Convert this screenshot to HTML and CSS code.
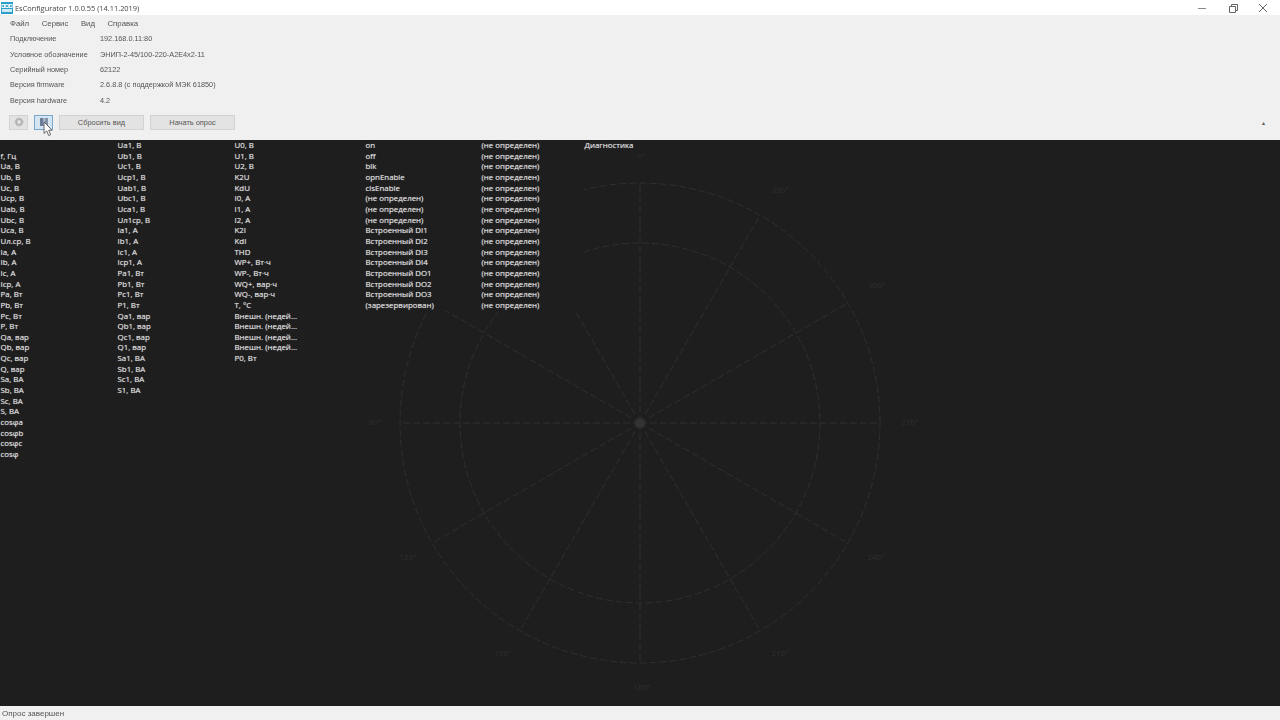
FILE: index.html
```html
<!DOCTYPE html>
<html lang="ru">
<head>
<meta charset="utf-8">
<title>EsConfigurator</title>
<link rel="stylesheet" href="styles.css">
</head>
<body>
<div class="window">
  <header class="titlebar">
    <svg class="logo" viewBox="0 0 12 12"><rect width="12" height="12" fill="#2a9fcb"/><rect x="1" y="2.5" width="2.6" height="3" fill="none" stroke="#fff" stroke-width=".9"/><rect x="4.7" y="2.5" width="2.6" height="3" fill="none" stroke="#fff" stroke-width=".9"/><rect x="8.4" y="2.5" width="2.6" height="3" fill="none" stroke="#fff" stroke-width=".9"/><rect x="1" y="7" width="10" height="3" fill="#cfeaf5"/></svg>
    <span class="title">EsConfigurator 1.0.0.55 (14.11.2019)</span>
    <div class="winctl">
      <svg viewBox="0 0 10 10"><path d="M1 5.5H9" stroke="#888" fill="none"/></svg>
      <svg viewBox="0 0 10 10"><path d="M1.5 3.5H7.5V9.5H1.5ZM3.5 3.5V1.5H9.5V7.5H7.5" stroke="#666" fill="none"/></svg>
      <svg viewBox="0 0 10 10"><path d="M1 1L9 9M9 1L1 9" stroke="#666" fill="none"/></svg>
    </div>
  </header>
  <section class="panel">
    <nav class="menu"><span>Файл</span><span>Сервис</span><span>Вид</span><span>Справка</span></nav>
    <dl class="info">
      <dt>Подключение</dt><dd>192.168.0.11:80</dd>
      <dt>Условное обозначение</dt><dd>ЭНИП-2-45/100-220-А2Е4х2-11</dd>
      <dt>Серийный номер</dt><dd>62122</dd>
      <dt>Версия firmware</dt><dd>2.6.8.8 (с поддержкой МЭК 61850)</dd>
      <dt>Версия hardware</dt><dd>4.2</dd>
    </dl>
    <div class="toolbar">
      <button class="btn icon-btn" type="button"><svg viewBox="0 0 12 12"><circle cx="6" cy="6" r="3.4" fill="none" stroke="#b0b0b0" stroke-width="2.2"/><circle cx="6" cy="6" r="5" fill="none" stroke="#bbb" stroke-width="1.2" stroke-dasharray="1.6 1.6"/></svg></button>
      <button class="btn icon-btn active" type="button"><svg viewBox="0 0 10 10"><rect x="1" y="1" width="3.5" height="8" fill="#6b7d98"/><rect x="5.5" y="1" width="3.5" height="8" fill="#8494ab"/></svg></button>
      <button class="btn wide" type="button">Сбросить вид</button>
      <button class="btn wide" type="button">Начать опрос</button>
      <span class="collapse">▴</span>
    </div>
    <svg class="cursor" viewBox="0 0 12 18"><path d="M1 1V14L4 11.2L6.2 16.4L8.4 15.4L6.2 10.4H10Z" fill="#fff" stroke="#555" stroke-width="1"/></svg>
  </section>
  <main class="scope">
    <svg class="polar" viewBox="0 0 1280 566">
      <g class="grid">
        <circle cx="640" cy="283" r="180"/>
        <circle cx="640" cy="283" r="240"/>
        <path d="M640 283V43M640 283L760 75.2M640 283L847.8 163M640 283H880M640 283L847.8 403M640 283L760 490.8M640 283V523M640 283L520 490.8M640 283L432.2 403M640 283H400M640 283L432.2 163M640 283L520 75.2"/>
      </g>
      <circle class="hub" cx="640" cy="283" r="5"/>
      <g class="deg">
        <text x="642" y="17">0°</text>
        <text x="780" y="51">330°</text>
        <text x="877" y="146">300°</text>
        <text x="910" y="283">270°</text>
        <text x="876" y="418">240°</text>
        <text x="780" y="514">210°</text>
        <text x="642" y="548">180°</text>
        <text x="503" y="514">150°</text>
        <text x="408" y="418">120°</text>
        <text x="375" y="283">90°</text>
      </g>
    </svg>
    <div class="tables">
      <ul class="col c1">
        <li>&nbsp;</li><li>f, Гц</li><li>Ua, В</li><li>Ub, В</li><li>Uc, В</li><li>Uср, В</li><li>Uab, В</li><li>Ubc, В</li><li>Uca, В</li><li>Uл.ср, В</li><li>Ia, А</li><li>Ib, А</li><li>Ic, А</li><li>Iср, А</li><li>Pa, Вт</li><li>Pb, Вт</li><li>Pc, Вт</li><li>P, Вт</li><li>Qa, вар</li><li>Qb, вар</li><li>Qc, вар</li><li>Q, вар</li><li>Sa, ВА</li><li>Sb, ВА</li><li>Sc, ВА</li><li>S, ВА</li><li>cosφa</li><li>cosφb</li><li>cosφc</li><li>cosφ</li>
      </ul>
      <ul class="col c2">
        <li>Ua1, В</li><li>Ub1, В</li><li>Uc1, В</li><li>Uср1, В</li><li>Uab1, В</li><li>Ubc1, В</li><li>Uca1, В</li><li>Uл1ср, В</li><li>Ia1, А</li><li>Ib1, А</li><li>Ic1, А</li><li>Iср1, А</li><li>Pa1, Вт</li><li>Pb1, Вт</li><li>Pc1, Вт</li><li>P1, Вт</li><li>Qa1, вар</li><li>Qb1, вар</li><li>Qc1, вар</li><li>Q1, вар</li><li>Sa1, ВА</li><li>Sb1, ВА</li><li>Sc1, ВА</li><li>S1, ВА</li>
      </ul>
      <ul class="col c3">
        <li>U0, В</li><li>U1, В</li><li>U2, В</li><li>K2U</li><li>KdU</li><li>I0, А</li><li>I1, А</li><li>I2, А</li><li>K2I</li><li>KdI</li><li>THD</li><li>WP+, Вт·ч</li><li>WP-, Вт·ч</li><li>WQ+, вар·ч</li><li>WQ-, вар·ч</li><li>T, °C</li><li>Внешн. (недей...</li><li>Внешн. (недей...</li><li>Внешн. (недей...</li><li>Внешн. (недей...</li><li>P0, Вт</li>
      </ul>
      <ul class="col c4">
        <li>on</li><li>off</li><li>blk</li><li>opnEnable</li><li>clsEnable</li><li>(не определен)</li><li>(не определен)</li><li>(не определен)</li><li>Встроенный DI1</li><li>Встроенный DI2</li><li>Встроенный DI3</li><li>Встроенный DI4</li><li>Встроенный DO1</li><li>Встроенный DO2</li><li>Встроенный DO3</li><li>(зарезервирован)</li>
      </ul>
      <ul class="col c5">
        <li>(не определен)</li><li>(не определен)</li><li>(не определен)</li><li>(не определен)</li><li>(не определен)</li><li>(не определен)</li><li>(не определен)</li><li>(не определен)</li><li>(не определен)</li><li>(не определен)</li><li>(не определен)</li><li>(не определен)</li><li>(не определен)</li><li>(не определен)</li><li>(не определен)</li><li>(не определен)</li>
      </ul>
    </div>
    <ul class="col c6"><li>Диагностика</li></ul>
  </main>
  <footer class="status">Опрос завершен</footer>
</div>
</body>
</html>
```
FILE: styles.css
```css
* { box-sizing: border-box; }
html, body { margin: 0; height: 100%; overflow: hidden; }
body { font-family: "Liberation Sans", "Noto Sans", sans-serif; font-size: 8px; color: #555; background: #f0f0f0; }
.window { display: flex; flex-direction: column; height: 720px; width: 1280px; }

.titlebar { display: flex; align-items: center; height: 15px; flex: none; background: #fff; padding-left: 1px; }
.logo { width: 12px; height: 12px; flex: none; }
.title { margin-left: 2px; font-family: "Open Sans", sans-serif; font-size: 7.4px; color: #444; filter: blur(.2px); }
.winctl { margin-left: auto; display: flex; gap: 20.5px; padding-right: 12px; align-items: center; }
.winctl svg { width: 10px; height: 10px; display: block; }

.panel { position: relative; height: 125px; flex: none; background: #f0f0f0; padding: 0 0 0 10px; }
.menu { display: flex; height: 16px; align-items: center; gap: 12.5px; color: #555; font-size: 7.8px; filter: blur(.2px); }
.info { margin: 0; display: grid; grid-template-columns: 90px 1fr; grid-auto-rows: 15.4px; align-items: center; font-size: 7.3px; color: #555; filter: blur(.2px); }
.info dt, .info dd { margin: 0; white-space: nowrap; }
.toolbar { display: flex; align-items: center; gap: 6px; margin: 7px 0 0 -1px; height: 15px; }
.btn { height: 15px; padding: 0; border: 1px solid #d2d2d2; background: #e3e3e3; font: inherit; font-size: 7.4px; color: #555; display: flex; align-items: center; justify-content: center; }
.icon-btn { width: 19px; }
.icon-btn svg { width: 10px; height: 10px; }
.active { background: #d3e5f3; border-color: #7ba6cc; }
.wide { width: 85px; }
.collapse { margin-left: auto; margin-right: 15px; font-size: 6px; color: #555; }
.cursor { position: absolute; left: 43px; top: 106px; width: 11px; height: 16px; }

.scope { position: relative; flex: 1; background: #1e1e1e; display: flex; align-items: flex-start; color: #d8d8d8; font-family: "Open Sans", "Noto Sans", sans-serif; font-size: 7.9px; }
.polar { position: absolute; left: 0; top: 0; width: 1280px; height: 566px; filter: blur(.4px); }
.grid { fill: none; stroke: #303030; stroke-width: 1; stroke-dasharray: 7 3; }
.hub { fill: #333; }
.deg { fill: #303030; font-size: 8px; text-anchor: middle; dominant-baseline: middle; }
.tables { position: relative; display: flex; width: 584px; height: 171px; background: #1e1e1e; flex: none; }
.col { list-style: none; margin: 0; padding: 0; flex: none; position: relative; text-shadow: 0 0 .7px #bbb; }
.col li { height: 10.67px; line-height: 11.5px; padding-left: .5px; white-space: nowrap; }
.c1, .c2 { width: 117px; }
.c3 { width: 131px; }
.c4 { width: 116px; }
.c5 { width: 103px; }
.status { height: 14px; flex: none; background: #f0f0f0; padding-left: 2px; font-size: 8px; line-height: 15px; color: #555; filter: blur(.2px); }
```
